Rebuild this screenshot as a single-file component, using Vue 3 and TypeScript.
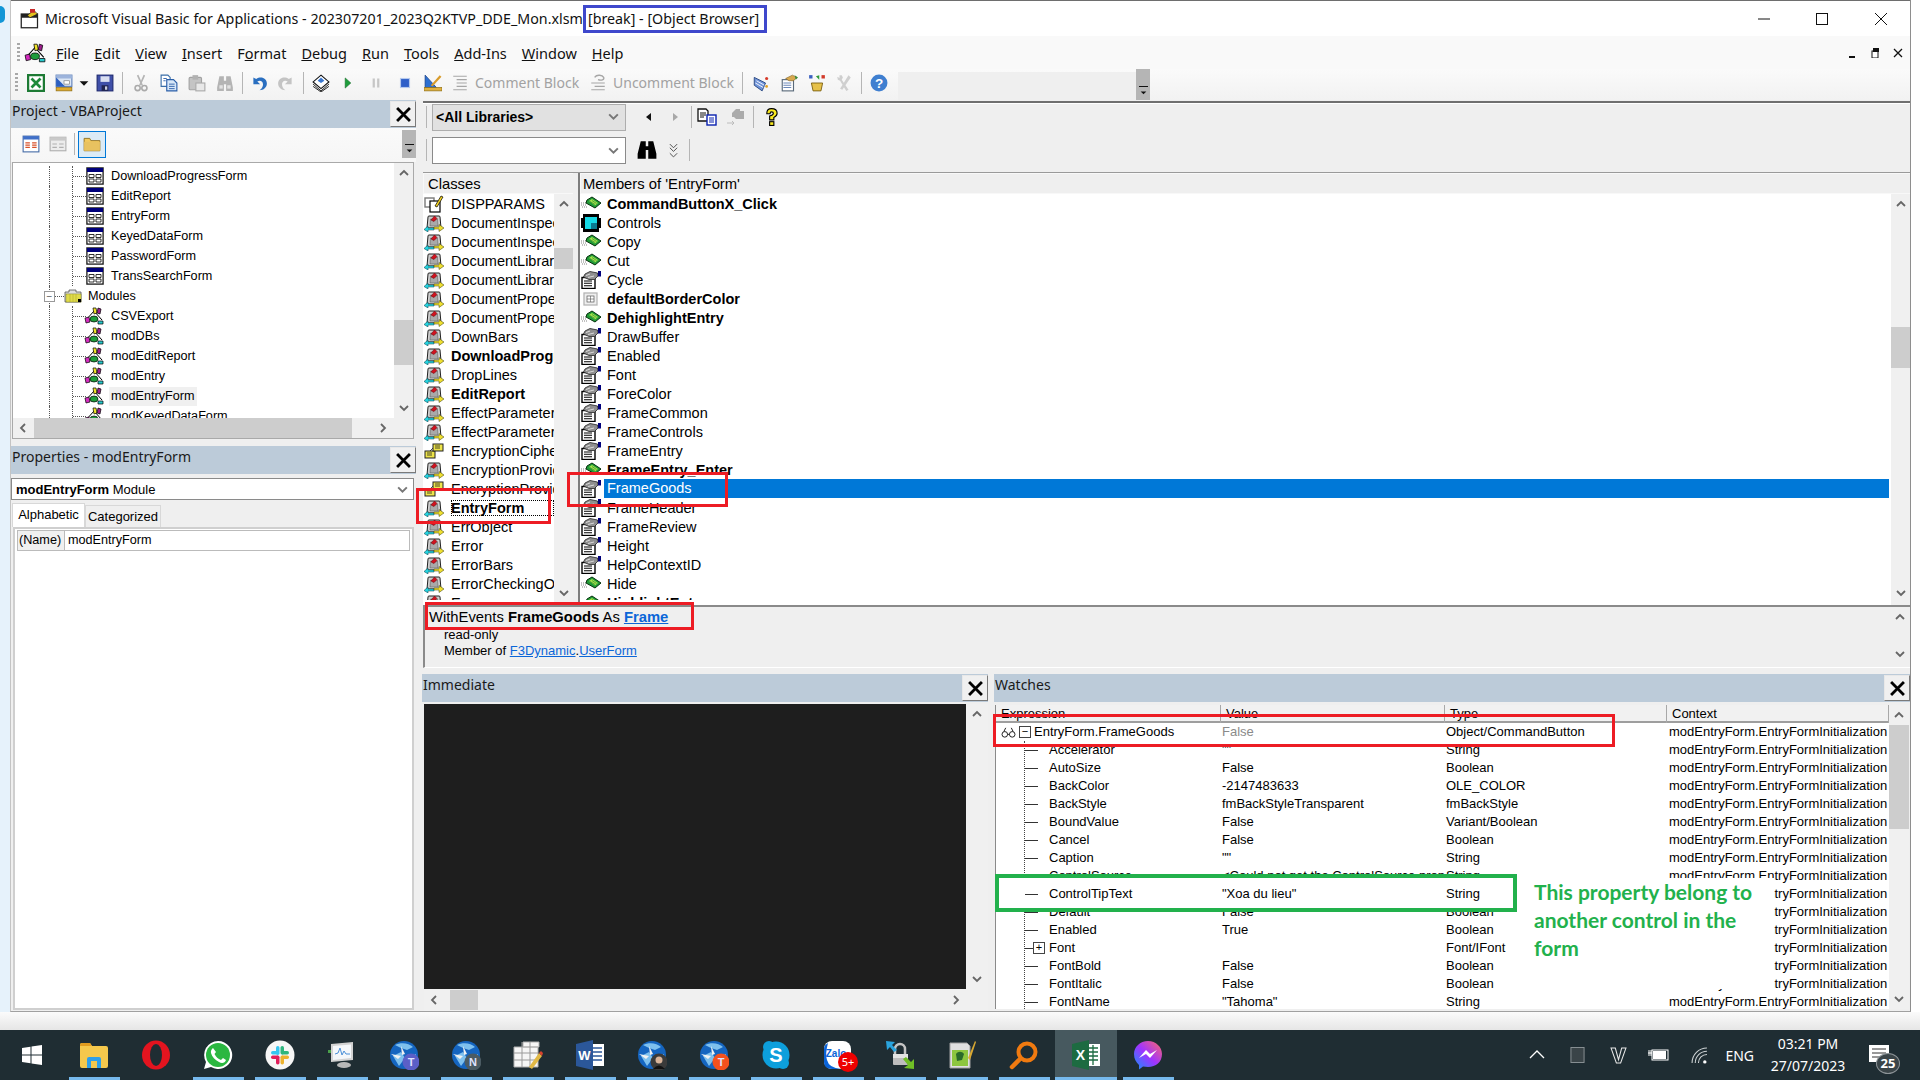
<script setup lang="ts">
interface Tool { id?: string; w: number; sep?: boolean; label?: string }
interface Item { t: string; icon: string; b?: boolean }
interface Watch { exp: string; val: string; type: string; kind?: string; gray?: boolean; top?: boolean }
interface App { id: string; line?: boolean; multi?: boolean; active?: boolean }

const menus = [
  { pre: '', key: 'F', post: 'ile' },
  { pre: '', key: 'E', post: 'dit' },
  { pre: '', key: 'V', post: 'iew' },
  { pre: '', key: 'I', post: 'nsert' },
  { pre: 'F', key: 'o', post: 'rmat' },
  { pre: '', key: 'D', post: 'ebug' },
  { pre: '', key: 'R', post: 'un' },
  { pre: '', key: 'T', post: 'ools' },
  { pre: '', key: 'A', post: 'dd-Ins' },
  { pre: '', key: 'W', post: 'indow' },
  { pre: '', key: 'H', post: 'elp' }
]

const tools: Tool[] = [
  { id: 'i-excel', w: 28 }, { id: 'i-uf', w: 27 }, { id: 'i-drop', w: 14 }, { id: 'i-save', w: 28 },
  { sep: true, w: 7 },
  { id: 'i-cut', w: 29 }, { id: 'i-copy', w: 28 }, { id: 'i-paste', w: 28 }, { id: 'i-find-g', w: 28 },
  { sep: true, w: 6 },
  { id: 'i-undo', w: 27 }, { id: 'i-redo', w: 27 },
  { sep: true, w: 8 },
  { id: 'i-break', w: 28 }, { id: 'i-play', w: 26 }, { id: 'i-pause', w: 30 }, { id: 'i-stop', w: 28 }, { id: 'i-design', w: 28 },
  { id: 'i-comment', w: 26 }, { label: 'Comment Block', w: 112 },
  { id: 'i-uncomment', w: 26 }, { label: 'Uncomment Block', w: 127 },
  { sep: true, w: 8 },
  { id: 'i-pb', w: 29 }, { id: 'i-hand', w: 28 }, { id: 'i-obj', w: 27 }, { id: 'i-wrench', w: 28 },
  { sep: true, w: 7 },
  { id: 'i-help', w: 27 }
]

const forms = ['DownloadProgressForm', 'EditReport', 'EntryForm', 'KeyedDataForm', 'PasswordForm', 'TransSearchForm']
const modules = ['CSVExport', 'modDBs', 'modEditReport', 'modEntry', 'modEntryForm', 'modKeyedDataForm']

const classes: Item[] = [
  { t: 'DISPPARAMS', icon: 'i-type' },
  { t: 'DocumentInspector', icon: 'i-class' },
  { t: 'DocumentInspectors', icon: 'i-class' },
  { t: 'DocumentLibraryVersion', icon: 'i-class' },
  { t: 'DocumentLibraryVersions', icon: 'i-class' },
  { t: 'DocumentProperties', icon: 'i-class' },
  { t: 'DocumentProperty', icon: 'i-class' },
  { t: 'DownBars', icon: 'i-class' },
  { t: 'DownloadProgressForm', icon: 'i-class', b: true },
  { t: 'DropLines', icon: 'i-class' },
  { t: 'EditReport', icon: 'i-class', b: true },
  { t: 'EffectParameter', icon: 'i-class' },
  { t: 'EffectParameters', icon: 'i-class' },
  { t: 'EncryptionCipherMode', icon: 'i-enum' },
  { t: 'EncryptionProvider', icon: 'i-class' },
  { t: 'EncryptionProviderDetail', icon: 'i-enum' },
  { t: 'EntryForm', icon: 'i-class', b: true },
  { t: 'ErrObject', icon: 'i-class' },
  { t: 'Error', icon: 'i-class' },
  { t: 'ErrorBars', icon: 'i-class' },
  { t: 'ErrorCheckingOptions', icon: 'i-class' },
  { t: 'Errors', icon: 'i-class' }
]

const members: Item[] = [
  { t: 'CommandButtonX_Click', icon: 'i-method', b: true },
  { t: 'Controls', icon: 'i-ctl' },
  { t: 'Copy', icon: 'i-method' },
  { t: 'Cut', icon: 'i-method' },
  { t: 'Cycle', icon: 'i-prop' },
  { t: 'defaultBorderColor', icon: 'i-const', b: true },
  { t: 'DehighlightEntry', icon: 'i-method', b: true },
  { t: 'DrawBuffer', icon: 'i-prop' },
  { t: 'Enabled', icon: 'i-prop' },
  { t: 'Font', icon: 'i-prop' },
  { t: 'ForeColor', icon: 'i-prop' },
  { t: 'FrameCommon', icon: 'i-prop' },
  { t: 'FrameControls', icon: 'i-prop' },
  { t: 'FrameEntry', icon: 'i-prop' },
  { t: 'FrameEntry_Enter', icon: 'i-method', b: true },
  { t: 'FrameGoods', icon: 'i-prop' },
  { t: 'FrameHeader', icon: 'i-prop' },
  { t: 'FrameReview', icon: 'i-prop' },
  { t: 'Height', icon: 'i-prop' },
  { t: 'HelpContextID', icon: 'i-prop' },
  { t: 'Hide', icon: 'i-method' },
  { t: 'HighlightEntry', icon: 'i-method', b: true }
]

const ctx = 'modEntryForm.EntryFormInitialization'

const watches: Watch[] = [
  { exp: 'EntryForm.FrameGoods', val: 'False', type: 'Object/CommandButton', kind: 'root', gray: true },
  { exp: 'Accelerator', val: '""', type: 'String' },
  { exp: 'AutoSize', val: 'False', type: 'Boolean' },
  { exp: 'BackColor', val: '-2147483633', type: 'OLE_COLOR' },
  { exp: 'BackStyle', val: 'fmBackStyleTransparent', type: 'fmBackStyle' },
  { exp: 'BoundValue', val: 'False', type: 'Variant/Boolean' },
  { exp: 'Cancel', val: 'False', type: 'Boolean' },
  { exp: 'Caption', val: '""', type: 'String' },
  { exp: 'ControlSource', val: '<Could not get the ControlSource property>', type: 'String' },
  { exp: 'ControlTipText', val: '"Xoa du lieu"', type: 'String', top: true },
  { exp: 'Default', val: 'False', type: 'Boolean' },
  { exp: 'Enabled', val: 'True', type: 'Boolean' },
  { exp: 'Font', val: '', type: 'Font/IFont', kind: 'plus' },
  { exp: 'FontBold', val: 'False', type: 'Boolean' },
  { exp: 'FontItalic', val: 'False', type: 'Boolean' },
  { exp: 'FontName', val: '"Tahoma"', type: 'String' }
]

const apps: App[] = [
  { id: 't-folder', line: true, multi: true },
  { id: 't-opera' },
  { id: 't-whatsapp', line: true },
  { id: 't-slack', line: true },
  { id: 't-monitor', line: true },
  { id: 't-globe-t', line: true },
  { id: 't-globe-n', line: true },
  { id: 't-table', line: true },
  { id: 't-word', line: true, multi: true },
  { id: 't-globe-p', line: true },
  { id: 't-globe-o', line: true },
  { id: 't-skype', line: true },
  { id: 't-zalo', line: true },
  { id: 't-lock', line: true },
  { id: 't-npp', line: true },
  { id: 't-search', line: true, multi: true },
  { id: 't-excel', line: true, multi: true, active: true },
  { id: 't-messenger', line: true }
]
</script>

<template>
  <div class="root">
    <svg class="defs" width="0" height="0" aria-hidden="true">
      <defs>
        <symbol id="chev" viewBox="0 0 12 12"><path d="M2 8 L6 4 L10 8" fill="none" stroke="currentColor" stroke-width="1.8" /></symbol>
        <symbol id="i-excel" viewBox="0 0 16 16"><rect x="1" y="1" width="14" height="14" fill="#fff" stroke="#1d7a34" stroke-width="2" /><path d="M4 4 L12 12 M12 4 L4 12" stroke="#1d8a3a" stroke-width="2.4" /></symbol>
        <symbol id="i-uf" viewBox="0 0 16 16"><rect x="1" y="1" width="14" height="10" fill="#dbe6f5" stroke="#5f7fb8" /><rect x="1" y="1" width="14" height="3" fill="#9db4dc" /><path d="M1 3 L9 11 H1 Z" fill="#2c5fc0" /><rect x="8" y="6" width="5" height="3" fill="#fff" stroke="#7a7a7a" stroke-width=".6" /><rect x="1" y="12" width="14" height="3" fill="#e0a92e" stroke="#8a6a10" stroke-width=".6" /></symbol>
        <symbol id="i-drop" viewBox="0 0 16 16"><path d="M3 6 H13 L8 11 Z" fill="#111" /></symbol>
        <symbol id="i-save" viewBox="0 0 16 16"><rect x="1" y="1" width="14" height="14" fill="#3f4fa8" stroke="#1f2a70" /><rect x="4" y="2" width="8" height="5" fill="#d9def0" /><rect x="5" y="10" width="6" height="5" fill="#20244f" /><rect x="8" y="11" width="2" height="3" fill="#c9cde0" /></symbol>
        <symbol id="i-cut" viewBox="0 0 16 16"><path d="M5 1 L9 10 M11 1 L7 10" stroke="#b4b4b4" stroke-width="1.5" /><circle cx="5" cy="12.5" r="2.3" fill="none" stroke="#aaa" stroke-width="1.4" /><circle cx="11" cy="12.5" r="2.3" fill="none" stroke="#aaa" stroke-width="1.4" /></symbol>
        <symbol id="i-copy" viewBox="0 0 16 16"><path d="M1 1 H7 L9 3 V11 H1 Z" fill="#fff" stroke="#3a6ea8" /><path d="M6 5 H12 L15 8 V15 H6 Z" fill="#d7e7f8" stroke="#2a5ea8" /><path d="M8 9 H13 M8 11 H13 M8 13 H13 M3 4 H6 M3 6 H5" stroke="#2a5ea8" stroke-width=".8" /></symbol>
        <symbol id="i-paste" viewBox="0 0 16 16"><rect x="1" y="3" width="11" height="11" rx="1" fill="#c4c4c4" stroke="#a2a2a2" /><rect x="4" y="1" width="5" height="4" fill="#b2b2b2" /><rect x="7" y="8" width="8" height="7" fill="#e8e8e8" stroke="#aaa" /></symbol>
        <symbol id="i-find-g" viewBox="0 0 16 16"><path d="M3 2 H7 V6 H9 V2 H13 L15 12 V15 H9 V9 H7 V15 H1 V12 Z" fill="#b4b4b4" /><rect x="3" y="10" width="3" height="3" fill="#e2e2e2" /><rect x="10" y="10" width="3" height="3" fill="#e2e2e2" /></symbol>
        <symbol id="i-find" viewBox="0 0 16 16"><path d="M3 1 H7 V5 H9 V1 H13 L15.5 11 V15 H9 V8 H7 V15 H.5 V11 Z" fill="#000" /></symbol>
        <symbol id="i-undo" viewBox="0 0 16 16"><path d="M3 3 V9 H9 L6.5 6.7 C9 5 12 6.5 11.5 10 C11.2 12 10 13.5 8.5 14.5 C12 14.5 15 12 15 8.5 C15 4 10 1.5 5.5 4.5 Z" fill="#2a6fc0" /></symbol>
        <symbol id="i-redo" viewBox="0 0 16 16"><path d="M13 3 V9 H7 L9.5 6.7 C7 5 4 6.5 4.5 10 C4.8 12 6 13.5 7.5 14.5 C4 14.5 1 12 1 8.5 C1 4 6 1.5 10.5 4.5 Z" fill="#c4c4c4" /></symbol>
        <symbol id="i-break" viewBox="0 0 16 16"><path d="M8 1 L15 7 L8 13 L1 7 Z" fill="#fff" stroke="#111" /><path d="M1 9 L8 15 L15 9 M1 11 L8 16 L15 11" fill="none" stroke="#111" stroke-width=".8" /><path d="M8 3 L11 6 L8 8 L5 6 Z" fill="#3a78d0" /></symbol>
        <symbol id="i-play" viewBox="0 0 16 16"><path d="M5.5 3.5 L10.5 8 L5.5 12.5 Z" fill="#1f9d3c" stroke="#0e6a22" stroke-width=".5" /></symbol>
        <symbol id="i-pause" viewBox="0 0 16 16"><rect x="5" y="4" width="2" height="8" fill="#c6c6c6" /><rect x="9" y="4" width="2" height="8" fill="#c6c6c6" /></symbol>
        <symbol id="i-stop" viewBox="0 0 16 16"><rect x="4" y="4" width="8" height="8" fill="#2f5fc8" stroke="#b5c9ee" /></symbol>
        <symbol id="i-design" viewBox="0 0 16 16"><path d="M1 1 L11 12 H1 Z" fill="#2c6fd0" stroke="#16408a" stroke-width=".7" /><path d="M6 10 L14 1 L15.5 2.5 L7.5 11 Z" fill="#d89b2a" /><rect x="0" y="12" width="16" height="3" fill="#e0b040" stroke="#8a6a10" stroke-width=".6" /></symbol>
        <symbol id="i-comment" viewBox="0 0 16 16"><path d="M2 2 H14 M5 5 H14 M5 8 H14 M5 11 H14 M2 14 H14" stroke="#a6a6a6" stroke-width="1.1" /></symbol>
        <symbol id="i-uncomment" viewBox="0 0 16 16"><path d="M5 3 C7 0 12 1 13 3 C14 5 11 6 8 5" fill="none" stroke="#a6a6a6" stroke-width="1.2" /><path d="M2 8 H14 M5 11 H14 M2 14 H14" stroke="#a6a6a6" stroke-width="1.1" /></symbol>
        <symbol id="i-pb" viewBox="0 0 16 16"><path d="M2 3 L12 8 L9 15 L2 10 Z" fill="#6f93d8" stroke="#27457f" stroke-width=".8" /><path d="M4 6 L11 10 M3 8 L10 12" stroke="#fff" stroke-width=".8" /><circle cx="13" cy="4" r="1.4" fill="#d63a2a" /><circle cx="13" cy="11" r="1.2" fill="#e0a020" /></symbol>
        <symbol id="i-hand" viewBox="0 0 16 16"><rect x="2" y="5" width="10" height="10" fill="#fff" stroke="#5a6a7a" /><path d="M3 8 H10 M3 10 H10 M3 12 H10" stroke="#5a7ab0" stroke-width=".8" /><path d="M5 4 L11 1 L15 3 L12 6 L8 6 Z" fill="#d8a84e" stroke="#7a5a1a" stroke-width=".5" /><path d="M13 1 L16 3 L14 5 Z" fill="#3a8a3a" /></symbol>
        <symbol id="i-obj" viewBox="0 0 16 16"><path d="M3 8 L13 8 L11.5 15 H4.5 Z" fill="#e6c14a" stroke="#7a5f10" stroke-width=".8" /><rect x="1" y="1" width="3" height="3" fill="#3a5fc0" /><path d="M7 2 L10 1 V5 Z" fill="#2f9a3a" /><rect x="12" y="1" width="3" height="3" fill="#d23a2a" /></symbol>
        <symbol id="i-wrench" viewBox="0 0 16 16"><path d="M4 1 L6 1 L7 3 L6 5 L12 14 L10 15 L4.5 6 L2.5 5 L2 2.5 L4 3.5 Z M12 1 L14 3 L6.5 14 L4.5 13 Z" fill="#cfcfcf" /></symbol>
        <symbol id="i-help" viewBox="0 0 16 16"><circle cx="8" cy="8" r="7.5" fill="#3f7fd0" /><text x="8" y="12.4" text-anchor="middle" font-family="Liberation Sans, sans-serif" font-weight="700" font-size="12" fill="#fff">?</text></symbol>
        <symbol id="i-code" viewBox="0 0 16 16"><rect x="1" y="1" width="14" height="14" fill="#fff" stroke="#4a6fa8" /><rect x="1" y="1" width="14" height="3" fill="#3f6fc8" /><path d="M3 7 H7 M3 9 H7 M3 11 H7 M9 7 H13 M9 9 H13 M9 11 H13" stroke="#d8502a" stroke-width="1" /></symbol>
        <symbol id="i-view" viewBox="0 0 16 16"><rect x="1" y="2" width="14" height="12" fill="#ececec" stroke="#b0b0b0" /><rect x="1" y="2" width="14" height="3" fill="#c9c9c9" /><path d="M3 8 H7 M3 11 H7 M9 8 H13 M9 11 H13" stroke="#b0b0b0" stroke-width="1" /></symbol>
        <symbol id="i-fold" viewBox="0 0 16 16"><path d="M1 3 H6 L7 5 H15 V14 H1 Z" fill="#f2c95c" stroke="#8d6d1c" stroke-width=".8" /><path d="M1 6 H15 V14 H1 Z" fill="#e8c260" /></symbol>
        <symbol id="i-form" viewBox="0 0 18 18"><rect width="18" height="18" fill="#a9a9a9" /><rect x="1" y="1" width="16" height="16" fill="#fff" stroke="#000" /><rect x="1" y="1" width="16" height="4" fill="#00007a" /><path d="M3 7.5 H8 V10.5 H3 Z M3 12 H8 V15 H3 Z M10 7.5 H15 V10.5 H10 Z M10 12 H15 V15 H10 Z" fill="none" stroke="#000" stroke-width=".8" /></symbol>
        <symbol id="i-mod" viewBox="0 0 20 18"><path d="M2 13 L10 4 L18 13" fill="none" stroke="#000" stroke-width="1" /><path d="M9 1 L12 1 L13 6 L10 7 Z" fill="#f3e52a" stroke="#000" stroke-width=".7" /><path d="M14 1 L17 2 L16 7 L13 6 Z" fill="#9d1f8d" stroke="#000" stroke-width=".7" /><path d="M1 11 L5 10 L6 15 L2 16 Z" fill="#d42bbf" stroke="#000" stroke-width=".7" /><ellipse cx="10" cy="12" rx="4" ry="3" fill="#1d9c3b" stroke="#000" stroke-width=".7" /><path d="M14 14 L19 14 L19 17 L14 17 Z" fill="#27c9cc" stroke="#000" stroke-width=".7" /></symbol>
        <symbol id="i-modf" viewBox="0 0 18 14"><path d="M1 3 H5 L5 1 H12 V3 H17 V13 H1 Z" fill="#ddd" stroke="#555" stroke-width=".8" /><rect x="2" y="5" width="15" height="8" fill="#f2ee55" stroke="#7a7a20" stroke-width=".6" /><path d="M3 7 H16 M3 9 H16 M3 11 H16 M6 5 V13 M9 5 V13 M12 5 V13" stroke="#a9a02a" stroke-width=".5" /><rect x="14" y="10" width="3" height="3" fill="#000" /></symbol>
        <symbol id="i-class" viewBox="0 0 20 18"><path d="M3 14 L4 3 Q4 2 5 2 H15 Q16 2 16 3 L17 14 Z" fill="#cfcfcf" stroke="#222" /><path d="M6 12 L6.5 5 H13.5 L14 12 Z" fill="#a9a9a9" stroke="#555" stroke-width=".5" /><path d="M7 6 L10.5 2 L13 4.5 L10 7.5 Z" fill="#d2121e" stroke="#5a0008" stroke-width=".5" /><path d="M0 15.5 L4 12 V14 H10 V16 H4 V18 Z" fill="#26d4e0" stroke="#0a3a44" stroke-width=".5" /><path d="M20 14 L15 10.5 V13 H10 V15 H15 V17.5 Z" fill="#f0e030" stroke="#3a3a00" stroke-width=".5" /></symbol>
        <symbol id="i-type" viewBox="0 0 20 18"><rect x="1" y="3" width="9" height="9" fill="#fff" stroke="#7a7a7a" stroke-width="1.4" /><rect x="6" y="6" width="10" height="11" fill="#fff" stroke="#000" stroke-width="1.2" /><path d="M11 11 L17 1 L19 2 L13 12 Z" fill="#f0d020" stroke="#000" stroke-width=".7" /></symbol>
        <symbol id="i-enum" viewBox="0 0 20 18"><rect x="1" y="9" width="10" height="7" fill="#eee44a" stroke="#222" /><rect x="9" y="2" width="10" height="7" fill="#eee44a" stroke="#222" /><path d="M3 11 H8 M3 13 H8 M11 4 H16 M11 6 H16 M6 9 L9 6" stroke="#222" stroke-width=".8" /></symbol>
        <symbol id="i-method" viewBox="0 0 20 18"><path d="M0 8 H6 M0 10 H5 M1 12 H6" stroke="#777" stroke-width=".9" stroke-dasharray="1 1" /><path d="M6 5 L11 2 L20 8 L14 13 L5 8 Z" fill="#1f9a36" stroke="#07300d" stroke-width="1" /><path d="M8 6 L11 4 L17 8 L14 10.5 Z" fill="#a4e34a" /><path d="M9 6.5 L14 9.5 M11 5.5 L15.5 8.5" stroke="#1f7a30" stroke-width=".6" /></symbol>
        <symbol id="i-ctl" viewBox="0 0 20 18"><rect x="2" y="0" width="16" height="18" fill="#000" /><rect x="0" y="4" width="20" height="10" fill="#000" /><rect x="4" y="3" width="12" height="12" fill="#16d8e4" /><rect x="10" y="9" width="6" height="6" fill="#0a7a90" /></symbol>
        <symbol id="i-prop" viewBox="0 0 20 18"><rect x="1" y="6.5" width="13" height="11" fill="#fff" stroke="#000" stroke-width="1.4" /><path d="M3 10 H11 M3 12.3 H11 M3 14.7 H11" stroke="#000" stroke-width="1.1" /><path d="M2.5 6 L4 3 L9 0.5 L16.5 2 L17 5 L13.5 8.5 L8 8.5 Z" fill="#8f8f8f" stroke="#222" stroke-width=".8" /><path d="M5 4.5 L9 3 M7 6.5 L13 5" stroke="#e2e2e2" stroke-width=".9" /><rect x="17" y="0" width="3" height="5.5" fill="#00007a" /></symbol>
        <symbol id="i-const" viewBox="0 0 20 18"><rect x="3" y="3" width="13" height="12" fill="#efefef" stroke="#b5b5b5" stroke-width="1.3" /><rect x="6" y="6" width="7" height="6" fill="#fff" stroke="#555" stroke-width=".7" /><path d="M9.5 6 V12 M6 9 H13" stroke="#555" stroke-width=".6" /></symbol>
        <symbol id="i-back" viewBox="0 0 12 12"><path d="M8 2 V10 L3 6 Z" fill="#111" /></symbol>
        <symbol id="i-fwd" viewBox="0 0 12 12"><path d="M4 2 V10 L9 6 Z" fill="#a8a8a8" /></symbol>
        <symbol id="i-docs" viewBox="0 0 20 18"><path d="M1 1 H9 L11 3 V13 H1 Z" fill="#fff" stroke="#111" stroke-width="1.3" /><path d="M3 5 H9 M3 7 H9 M3 9 H7" stroke="#111" /><rect x="10" y="7" width="9" height="10" fill="#fff" stroke="#0a22b0" stroke-width="1.4" /><path d="M12 10 H17 M12 12 H17 M12 14 H17" stroke="#0a22b0" /></symbol>
        <symbol id="i-plug" viewBox="0 0 20 18"><path d="M6 5 L10 1 H14 V3 H18 V11 H10 L8 9 H6 Z" fill="#ababab" /><path d="M1 15 H8 M6 13 L8 15 L6 17" stroke="#bcbcbc" fill="none" /></symbol>
        <symbol id="i-qm" viewBox="0 0 16 20"><path d="M3 6 Q3 1 8 1 Q14 1 14 6 Q14 9 10.5 10.5 V13 H6 V9 Q10 8 10 6 Q10 4.5 8 4.5 Q6.5 4.5 6.5 6.5 H3 Z" fill="#f8e81e" stroke="#000" stroke-width="1.2" /><rect x="6" y="15" width="4.5" height="4" fill="#f8e81e" stroke="#000" stroke-width="1.2" /></symbol>
        <symbol id="i-show" viewBox="0 0 12 16"><path d="M2 1 L6 5 L10 1 M2 5 L6 9 L10 5 M2 11 L6 15 L10 11" fill="none" stroke="#444" stroke-width="1" /></symbol>
        <symbol id="i-glass" viewBox="0 0 16 14"><circle cx="4" cy="9" r="3" fill="none" stroke="#111" /><circle cx="12" cy="9" r="3" fill="none" stroke="#111" /><path d="M7 9 H9 M3 6 L5 2 M13 6 L11 2" stroke="#111" fill="none" /></symbol>

        <symbol id="t-win" viewBox="0 0 20 20"><path d="M0 3 L8.5 1.8 V9.5 H0 Z M9.5 1.6 L20 0 V9.5 H9.5 Z M0 10.5 H8.5 V18.2 L0 17 Z M9.5 10.5 H20 V20 L9.5 18.4 Z" fill="#fff" /></symbol>
        <symbol id="t-folder" viewBox="0 0 30 30"><path d="M1 5 Q1 3 3 3 H11 L13 6 H27 Q29 6 29 8 V26 Q29 28 27 28 H3 Q1 28 1 26 Z" fill="#f5c84c" /><path d="M1 5 Q1 3 3 3 H11 L13 6 H1 Z" fill="#e09b1f" /><path d="M8 28 V19 Q8 17 10 17 H20 Q22 17 22 19 V28 H18 V21 H12 V28 Z" fill="#2f9fe8" /></symbol>
        <symbol id="t-opera" viewBox="0 0 30 30"><ellipse cx="15" cy="15" rx="14" ry="14.5" fill="#e3141f" /><ellipse cx="15" cy="15" rx="6" ry="11" fill="#1f2d33" /></symbol>
        <symbol id="t-whatsapp" viewBox="0 0 30 30"><path d="M15 1 A14 14 0 1 1 8 27 L1 29 L3 22 A14 14 0 0 1 15 1 Z" fill="#fff" /><circle cx="15" cy="15" r="12" fill="#2bb741" /><path d="M10 8 L13 12 L11.5 14 C13 17 15 19 18 20 L20 18 L23 20 C22 23 19 24 16 22 C12 20 9 17 8 13 C7.5 11 8.5 9 10 8 Z" fill="#fff" /></symbol>
        <symbol id="t-slack" viewBox="0 0 30 30"><circle cx="15" cy="15" r="14.5" fill="#f6f6f6" /><rect x="11" y="6" width="3.5" height="9" rx="1.7" fill="#36c5f0" /><rect x="6" y="11" width="8" height="3.5" rx="1.7" fill="#36c5f0" /><rect x="15.5" y="6" width="3.5" height="8.5" rx="1.7" fill="#2eb67d" /><rect x="16" y="11" width="8" height="3.5" rx="1.7" fill="#2eb67d" /><rect x="15.5" y="15.5" width="3.5" height="9" rx="1.7" fill="#ecb22e" /><rect x="16" y="15.5" width="8" height="3.5" rx="1.7" fill="#ecb22e" /><rect x="11" y="15.5" width="3.5" height="9" rx="1.7" fill="#e01e5a" /><rect x="6" y="15.5" width="8" height="3.5" rx="1.7" fill="#e01e5a" /></symbol>
        <symbol id="t-monitor" viewBox="0 0 30 30"><path d="M4 4 L26 2 V20 L4 22 Z" fill="#d2d2d2" /><path d="M6 6 L24 4.5 V18 L6 20 Z" fill="#f4f7fa" /><path d="M8 14 L11 13 L13 8 L15 15 L17 11 L19 14 H23" fill="none" stroke="#4a8fd8" /><ellipse cx="17" cy="25" rx="7" ry="3" fill="#b8b8b8" /><rect x="1" y="10" width="3" height="3" fill="#4aa04a" /></symbol>
        <symbol id="t-globe" viewBox="0 0 30 30"><circle cx="15" cy="15" r="14" fill="#1565c0" /><path d="M6 5 C12 2 20 3 24 7 L18 10 L12 8 Z M4 16 L12 12 L16 18 L10 26 Z M20 18 L27 14 L26 22 L20 26 Z" fill="#7ec0ee" /><path d="M2 14 L12 16 L9 19 Z M12 6 L16 14 L13 15 Z" fill="#f1f1f1" /></symbol>
        <symbol id="t-table" viewBox="0 0 30 30"><path d="M1 7 H25 V27 H1 Z M10 2 H26 V7 H10 Z" fill="#f6f6f6" stroke="#b0b0b0" /><path d="M9 2 V27 M17 2 V27 M1 13 H25 M1 20 H25" stroke="#9a9a9a" /><path d="M16 27 L26 13 L29 16 L19 29 Z" fill="#e0b845" /><path d="M26 13 L29 16 L30 13 L28 11 Z" fill="#d8432e" /></symbol>
        <symbol id="t-word" viewBox="0 0 30 30"><rect x="14" y="4" width="15" height="22" fill="#fff" /><path d="M17 8 H27 M17 12 H27 M17 16 H27 M17 20 H27" stroke="#2b579a" stroke-width="1.5" /><path d="M1 4 L18 0 V30 L1 26 Z" fill="#2b579a" /><text x="9.5" y="20" text-anchor="middle" font-family="Liberation Sans, sans-serif" font-weight="700" font-size="13" fill="#fff">W</text></symbol>
        <symbol id="t-skype" viewBox="0 0 30 30"><circle cx="15" cy="15" r="13.5" fill="#0d9fdc" /><circle cx="8" cy="7" r="6" fill="#0d9fdc" /><circle cx="22" cy="23" r="6" fill="#0d9fdc" /><text x="15" y="22" text-anchor="middle" font-family="Liberation Sans, sans-serif" font-weight="700" font-size="20" fill="#fff">S</text></symbol>
        <symbol id="t-zalo" viewBox="0 0 30 30"><rect x="1" y="1" width="27" height="28" rx="8" fill="#fff" /><path d="M1 9 V22 Q1 29 9 29 H18 Q6 28 4 20 Q2 14 5 3 Q1 5 1 9 Z" fill="#0a63d8" /><text x="13" y="17" text-anchor="middle" font-family="Liberation Sans, sans-serif" font-weight="700" font-size="10" fill="#0a63d8">Zalo</text></symbol>
        <symbol id="t-lock" viewBox="0 0 30 30"><path d="M10 14 V9 A5 5 0 0 1 20 9 V14" fill="none" stroke="#c4c4c4" stroke-width="2.5" /><rect x="8" y="14" width="15" height="11" rx="1" fill="#bdbdbd" /><rect x="8" y="14" width="15" height="4" fill="#e3e3e3" /><path d="M1 1 L10 2 L7 5 L12 10 L9 12 L5 7 L2 10 Z" fill="#2aa4de" /><path d="M29 29 L19 28 L23 25 L18 19 L21 17 L26 22 L29 19 Z" fill="#6fbe26" /></symbol>
        <symbol id="t-npp" viewBox="0 0 30 30"><path d="M3 3 H20 L23 6 V28 H3 Z" fill="#e0e0e0" stroke="#a0a0a0" /><rect x="5" y="10" width="16" height="16" fill="#8dc63f" /><path d="M9 14 C11 11 15 11 17 14 L15 20 L10 21 Z" fill="#2a6a2a" /><path d="M21 18 L28 1 L29 2 L23 20 Z" fill="#d8a832" /></symbol>
        <symbol id="t-search" viewBox="0 0 30 30"><circle cx="18" cy="12" r="8.5" fill="none" stroke="#f07a10" stroke-width="4" /><path d="M11 19 L3 27" stroke="#f07a10" stroke-width="4.5" stroke-linecap="round" /></symbol>
        <symbol id="t-excel" viewBox="0 0 30 30"><rect x="14" y="4" width="15" height="22" fill="#fff" /><path d="M17 8 H27 M17 12 H27 M17 16 H27 M17 20 H27 M22 5 V25" stroke="#1d6b41" stroke-width="1.3" /><path d="M1 4 L18 0 V30 L1 26 Z" fill="#1d6b41" /><text x="9.5" y="20" text-anchor="middle" font-family="Liberation Sans, sans-serif" font-weight="700" font-size="14" fill="#fff">X</text></symbol>
        <symbol id="t-messenger" viewBox="0 0 30 30"><defs><linearGradient id="msg" x1="0" y1="1" x2="1" y2="0"><stop offset="0" stop-color="#1292ff" /><stop offset=".5" stop-color="#a033ff" /><stop offset="1" stop-color="#ff6968" /></linearGradient></defs><path d="M15 1 C23 1 29 7 29 14 C29 22 23 27 15 27 L10 26.5 L6 29.5 V25 C3 22 1 19 1 14 C1 7 7 1 15 1 Z" fill="url(#msg)" /><path d="M6 18 L13 10 L17 14 L24 10 L17 18 L13 14 Z" fill="#fff" /></symbol>
      </defs>
    </svg>

    <span class="desk-dot"></span>

    <div class="main">
      <div class="window">
        <header class="titlebar">
          <svg class="app-ic" viewBox="0 0 16 16"><rect x="1" y="4" width="13" height="11" fill="#fff" stroke="#222" /><path d="M1 4 H14 V7 H1 Z" fill="#222" /><path d="M6 5 L11 1 L14 4 L8 7 Z" fill="#e2c21e" stroke="#222" stroke-width=".6" /><rect x="8" y="0" width="4" height="3" fill="#c92a2a" /></svg>
          <span class="title-text">Microsoft Visual Basic for Applications - 202307201_2023Q2KTVP_DDE_Mon.xlsm</span>
          <span class="title-box">[break] - [Object Browser]</span>
          <div class="win-btns">
            <span class="win-btn"><svg viewBox="0 0 12 12" width="12" height="12"><path d="M0 6 H12" stroke="#111" /></svg></span>
            <span class="win-btn"><svg viewBox="0 0 12 12" width="12" height="12"><rect x=".5" y=".5" width="11" height="11" fill="none" stroke="#111" /></svg></span>
            <span class="win-btn"><svg viewBox="0 0 12 12" width="12" height="12"><path d="M0 0 L12 12 M12 0 L0 12" stroke="#111" /></svg></span>
          </div>
        </header>

        <nav class="menubar">
          <span class="grip"></span>
          <svg class="menu-ic" viewBox="0 0 20 18"><use href="#i-mod" /></svg>
          <span v-for="m in menus" :key="m.key + m.post" class="menu-item">{{ m.pre }}<u>{{ m.key }}</u>{{ m.post }}</span>
          <div class="mdi-btns">
            <svg viewBox="0 0 10 10" width="10" height="10"><rect x="2" y="8" width="6" height="2" fill="#111" /></svg>
            <svg viewBox="0 0 10 10" width="10" height="10"><rect x="2" y="3" width="6" height="7" fill="#fff" stroke="#111" /><rect x="3" y="0" width="6" height="4" fill="#111" /></svg>
            <svg viewBox="0 0 10 10" width="10" height="10"><path d="M1 1 L9 9 M9 1 L1 9" stroke="#111" stroke-width="1.3" /></svg>
          </div>
        </nav>

        <div class="toolbar">
          <span class="grip tb-grip"></span>
          <template v-for="(t, i) in tools" :key="i">
            <span v-if="t.sep" class="tb-sep-slot" :style="{ width: t.w + 'px' }"><i class="tb-sep"></i></span>
            <span v-else-if="t.label" class="tb-label" :style="{ width: t.w + 'px' }">{{ t.label }}</span>
            <span v-else class="tb-btn" :style="{ width: t.w + 'px' }"><svg class="ic16" viewBox="0 0 16 16"><use :href="`#${t.id}`" /></svg></span>
          </template>
          <span class="tb-well"></span>
          <span class="tb-handle"><i></i><svg viewBox="0 0 16 16" width="9" height="9"><use href="#i-drop" /></svg></span>
        </div>

        <div class="workspace">
          <aside class="left">
            <section class="project">
              <div class="pane-title"><span>Project - VBAProject</span><button class="x-btn">
                <svg viewBox="0 0 14 14" width="15" height="15"><path d="M1 1 L13 13 M13 1 L1 13" stroke="#000" stroke-width="2.6" /></svg></button></div>
              <div class="proj-tools">
                <span class="pt-btn"><svg class="ic16" viewBox="0 0 16 16"><use href="#i-code" /></svg></span>
                <span class="pt-btn"><svg class="ic16" viewBox="0 0 16 16"><use href="#i-view" /></svg></span>
                <i class="tb-sep pt-sep"></i>
                <span class="pt-btn on"><svg class="ic16" viewBox="0 0 16 16"><use href="#i-fold" /></svg></span>
                <span class="tb-handle pt-handle"><i></i><svg viewBox="0 0 16 16" width="9" height="9"><use href="#i-drop" /></svg></span>
              </div>
              <div class="tree">
                <div class="tree-top">
                  <div class="tree-rows">
                    <div v-for="f in forms" :key="f" class="tree-row">
                      <i class="g1"></i><i class="g2"></i>
                      <svg class="tree-ic" viewBox="0 0 18 18"><use href="#i-form" /></svg>
                      <span class="tree-text">{{ f }}</span>
                    </div>
                    <div class="tree-row">
                      <i class="g1 g1-short"></i>
                      <span class="minus">−</span><i class="g3"></i>
                      <svg class="folder-ic" viewBox="0 0 18 14"><use href="#i-modf" /></svg>
                      <span class="tree-text folder-text">Modules</span>
                    </div>
                    <div v-for="m in modules" :key="m" class="tree-row">
                      <i class="g1"></i><i class="g2"></i>
                      <svg class="tree-ic mod" viewBox="0 0 20 18"><use href="#i-mod" /></svg>
                      <span class="tree-text" :class="{ sel: m === 'modEntryForm' }">{{ m }}</span>
                    </div>
                  </div>
                  <div class="vscroll tree-scroll">
                    <svg class="chev" viewBox="0 0 12 12"><use href="#chev" /></svg>
                    <span class="thumb-space top"></span>
                    <span class="thumb"></span>
                    <span class="thumb-space"></span>
                    <svg class="chev down" viewBox="0 0 12 12"><use href="#chev" /></svg>
                  </div>
                </div>
                <div class="hscroll">
                  <svg class="chev left-a" viewBox="0 0 12 12"><use href="#chev" /></svg>
                  <span class="h-thumb"></span>
                  <svg class="chev right-a" viewBox="0 0 12 12"><use href="#chev" /></svg>
                </div>
              </div>
            </section>

            <section class="props">
              <div class="pane-title"><span>Properties - modEntryForm</span><button class="x-btn">
                <svg viewBox="0 0 14 14" width="15" height="15"><path d="M1 1 L13 13 M13 1 L1 13" stroke="#000" stroke-width="2.6" /></svg></button></div>
              <div class="prop-combo"><span><b>modEntryForm</b> Module</span>
                <svg class="chev down thin" viewBox="0 0 12 12"><use href="#chev" /></svg></div>
              <div class="tabs"><span class="tab on">Alphabetic</span><span class="tab">Categorized</span></div>
              <div class="prop-grid">
                <div class="prop-row"><span class="prop-name">(Name)</span><span class="prop-val">modEntryForm</span></div>
              </div>
            </section>
          </aside>

          <div class="right">
            <section class="browser">
              <div class="ob-tools">
                <div class="ob-row">
                  <i class="tb-sep ob-grip"></i>
                  <div class="ob-combo gray"><b>&lt;All Libraries&gt;</b><svg class="chev down thin" viewBox="0 0 12 12"><use href="#chev" /></svg></div>
                  <span class="ob-btn first"><svg viewBox="0 0 12 12" width="12" height="12"><use href="#i-back" /></svg></span>
                  <span class="ob-btn"><svg viewBox="0 0 12 12" width="12" height="12"><use href="#i-fwd" /></svg></span>
                  <i class="tb-sep"></i>
                  <span class="ob-btn wide"><svg viewBox="0 0 20 18" width="20" height="18"><use href="#i-docs" /></svg></span>
                  <span class="ob-btn wide"><svg viewBox="0 0 20 18" width="20" height="18"><use href="#i-plug" /></svg></span>
                  <i class="tb-sep"></i>
                  <span class="ob-btn wide qm"><svg viewBox="0 0 16 20" width="15" height="20"><use href="#i-qm" /></svg></span>
                </div>
                <div class="ob-row">
                  <i class="tb-sep ob-grip"></i>
                  <div class="ob-combo"><span></span><svg class="chev down thin" viewBox="0 0 12 12"><use href="#chev" /></svg></div>
                  <span class="ob-btn first find"><svg viewBox="0 0 16 16" width="20" height="20"><use href="#i-find" /></svg></span>
                  <span class="ob-btn show"><svg viewBox="0 0 12 16" width="11" height="15"><use href="#i-show" /></svg></span>
                  <i class="tb-sep"></i>
                </div>
              </div>

              <div class="ob-lists">
                <div class="classes">
                  <div class="list-head">Classes</div>
                  <div class="list-body">
                    <div class="rows">
                      <div v-for="c in classes" :key="c.t" class="row" :class="{ bold: c.b }">
                        <svg class="row-ic" viewBox="0 0 20 18"><use :href="`#${c.icon}`" /></svg>
                        <span class="row-text" :class="{ focus: c.t === 'EntryForm' }">{{ c.t }}</span>
                      </div>
                    </div>
                    <div class="vscroll class-scroll">
                      <svg class="chev" viewBox="0 0 12 12"><use href="#chev" /></svg>
                      <span class="thumb-space cs-top"></span>
                      <span class="thumb cs-thumb"></span>
                      <span class="thumb-space"></span>
                      <svg class="chev down" viewBox="0 0 12 12"><use href="#chev" /></svg>
                    </div>
                  </div>
                </div>
                <div class="members">
                  <div class="list-head">Members of 'EntryForm'</div>
                  <div class="list-body">
                    <div class="rows">
                      <div v-for="m in members" :key="m.t" class="row" :class="{ bold: m.b, picked: m.t === 'FrameGoods' }">
                        <svg class="row-ic" viewBox="0 0 20 18"><use :href="`#${m.icon}`" /></svg>
                        <span class="row-text">{{ m.t }}</span>
                      </div>
                    </div>
                    <div class="vscroll mem-scroll">
                      <svg class="chev" viewBox="0 0 12 12"><use href="#chev" /></svg>
                      <span class="thumb-space ms-top"></span>
                      <span class="thumb ms-thumb"></span>
                      <span class="thumb-space"></span>
                      <svg class="chev down" viewBox="0 0 12 12"><use href="#chev" /></svg>
                    </div>
                  </div>
                </div>
              </div>

              <div class="desc">
                <div class="desc-text">
                  <div class="d1">WithEvents <b>FrameGoods</b> As <a><b>Frame</b></a></div>
                  <div class="d2">read-only</div>
                  <div class="d2">Member of <a>F3Dynamic</a>.<a>UserForm</a></div>
                </div>
                <div class="desc-scroll">
                  <svg class="chev" viewBox="0 0 12 12"><use href="#chev" /></svg>
                  <svg class="chev down" viewBox="0 0 12 12"><use href="#chev" /></svg>
                </div>
              </div>
            </section>

            <div class="bottom">
              <section class="immediate">
                <div class="pane-title"><span>Immediate</span><button class="x-btn">
                  <svg viewBox="0 0 14 14" width="15" height="15"><path d="M1 1 L13 13 M13 1 L1 13" stroke="#000" stroke-width="2.6" /></svg></button></div>
                <div class="imm-body">
                  <div class="imm-black"></div>
                  <div class="vscroll imm-scroll">
                    <svg class="chev" viewBox="0 0 12 12"><use href="#chev" /></svg>
                    <span class="thumb-space"></span>
                    <svg class="chev down" viewBox="0 0 12 12"><use href="#chev" /></svg>
                  </div>
                </div>
                <div class="hscroll imm-h">
                  <svg class="chev left-a" viewBox="0 0 12 12"><use href="#chev" /></svg>
                  <span class="imm-thumb"></span>
                  <svg class="chev right-a" viewBox="0 0 12 12"><use href="#chev" /></svg>
                </div>
              </section>

              <section class="watches">
                <div class="pane-title"><span>Watches</span><button class="x-btn">
                  <svg viewBox="0 0 14 14" width="15" height="15"><path d="M1 1 L13 13 M13 1 L1 13" stroke="#000" stroke-width="2.6" /></svg></button></div>
                <div class="w-body">
                  <div class="w-table">
                    <div class="w-head">
                      <span>Expression</span><span>Value</span><span>Type</span><span>Context</span>
                    </div>
                    <div class="w-rows">
                      <i class="w-line"></i>
                      <div v-for="w in watches" :key="w.exp" class="w-row" :class="{ top: w.top }">
                        <span class="w-exp">
                          <template v-if="w.kind === 'root'">
                            <svg class="glass" viewBox="0 0 16 14"><use href="#i-glass" /></svg>
                            <span class="box-mark">−</span>
                          </template>
                          <template v-else-if="w.kind === 'plus'">
                            <i class="w-dash short"></i><span class="box-mark plus">+</span>
                          </template>
                          <i v-else class="w-dash"></i>
                          <span>{{ w.exp }}</span>
                        </span>
                        <span class="w-val" :class="{ gray: w.gray }">{{ w.val }}</span>
                        <span class="w-type">{{ w.type }}</span>
                        <span class="w-ctx">{{ ctx }}</span>
                      </div>
                    </div>
                  </div>
                  <div class="vscroll w-scroll">
                    <svg class="chev" viewBox="0 0 12 12"><use href="#chev" /></svg>
                    <span class="thumb w-thumb"></span>
                    <span class="thumb-space"></span>
                    <svg class="chev down" viewBox="0 0 12 12"><use href="#chev" /></svg>
                  </div>
                </div>
              </section>
            </div>
          </div>
        </div>
      </div>
      <div class="shade"></div>
    </div>

    <footer class="taskbar">
      <span class="start"><svg viewBox="0 0 20 20" width="20" height="20"><use href="#t-win" /></svg></span>
      <span v-for="a in apps" :key="a.id" class="app" :class="{ active: a.active, line: a.line, multi: a.multi }">
        <svg v-if="a.id.startsWith('t-globe')" class="app-svg" viewBox="0 0 30 30">
          <use href="#t-globe" />
          <template v-if="a.id === 't-globe-t'"><circle cx="22" cy="22" r="8.5" fill="#5b5fc7" /><text x="22" y="26" text-anchor="middle" class="badge-t">T</text></template>
          <template v-if="a.id === 't-globe-n'"><circle cx="22" cy="22" r="8.5" fill="#4b5b63" /><text x="22" y="26" text-anchor="middle" class="badge-t">N</text></template>
          <template v-if="a.id === 't-globe-p'"><circle cx="22" cy="22" r="8.5" fill="#3a3a3a" /><circle cx="22" cy="20" r="3.5" fill="#d9b49a" /><path d="M16 29 Q22 22 28 29 Z" fill="#111" /></template>
          <template v-if="a.id === 't-globe-o'"><circle cx="22" cy="22" r="8.5" fill="#f4511e" /><text x="22" y="26" text-anchor="middle" class="badge-t">T</text></template>
        </svg>
        <svg v-else class="app-svg" viewBox="0 0 30 30"><use :href="`#${a.id}`" /></svg>
        <span v-if="a.id === 't-zalo'" class="zalo-badge">5+</span>
      </span>
      <span class="tb-fill"></span>
      <span class="tray"><svg viewBox="0 0 16 16" width="16" height="16"><path d="M1 11 L8 4 L15 11" fill="none" stroke="#fff" stroke-width="1.3" /></svg></span>
      <span class="tray"><svg viewBox="0 0 16 16" width="15" height="16"><rect x="1" y="0" width="14" height="16" fill="#3a4448" stroke="#8d9498" /></svg></span>
      <span class="tray"><svg viewBox="0 0 16 16" width="17" height="17"><path d="M1 1 H5 L8 12 L11 1 H15 L10 15 H6 Z" fill="none" stroke="#e8e8e8" /></svg></span>
      <span class="tray"><svg viewBox="0 0 21 12" width="21" height="12"><rect x="4" y="1" width="16" height="10" fill="#1f2d33" stroke="#fff" /><rect x="5" y="2" width="13" height="8" fill="#fff" /><path d="M0 4 H4 M1 1 V7 M3 1 V7" stroke="#fff" /></svg></span>
      <span class="tray"><svg viewBox="0 0 16 16" width="17" height="17"><path d="M1 15 A14 14 0 0 1 15 1 M4 15 A11 11 0 0 1 15 4 M7 15 A8 8 0 0 1 15 7" fill="none" stroke="#cfd4d6" /><circle cx="13" cy="14" r="1.6" fill="#fff" /></svg></span>
      <span class="tray eng">ENG</span>
      <span class="clock"><span>03:21 PM</span><span>27/07/2023</span></span>
      <span class="notif">
        <svg viewBox="0 0 20 17" width="20" height="17"><rect width="20" height="17" fill="#fff" /><path d="M3 4 H17 M3 8 H17 M3 12 H12" stroke="#333" /></svg>
        <b class="notif-n">25</b>
      </span>
    </footer>

    <!-- annotations drawn on top of the screenshot -->
    <i class="mark red m-class"></i>
    <i class="mark red m-member"></i>
    <i class="mark red m-desc"></i>
    <i class="mark red m-watch"></i>
    <span class="note-bg"></span>
    <i class="mark green m-tip"></i>
    <div class="note">This property belong to<br />another control in the<br />form</div>
  </div>
</template>

<style>
html, body { margin: 0; background: #fff; }
</style>

<style scoped>
* { box-sizing: border-box; }
.root {
  position: relative;
  width: 1920px;
  height: 1080px;
  overflow: hidden;
  display: flex;
  flex-direction: column;
  font: 13px "Liberation Sans", Arial, sans-serif;
  color: #000;
  background: #fff;
}
.defs { position: absolute; }
.desk-dot { position: absolute; left: -5px; top: 6px; width: 10px; height: 17px; border-radius: 5px; background: #1296d6; }

.main { height: 1030px; padding-left: 10px; background: linear-gradient(90deg, #e6f2fb 10px, #fff 10px); }
.window {
  width: 1901px;
  height: 1012px;
  display: flex;
  flex-direction: column;
  background: #efefef;
  border-right: 1px solid #8e8e8e;
  border-left: 1px solid #c4c4c4;
  border-bottom: 1px solid #a0a0a0;
}
.shade { height: 18px; margin-left: -10px; background: linear-gradient(#fbfbfb, #e6e6e6); }

.titlebar {
  height: 36px;
  flex: none;
  display: flex;
  align-items: center;
  background: #fff;
  border-top: 1px solid #6e6e6e;
  padding-left: 9px;
  font: 14.25px "Noto Sans", sans-serif;
  color: #111;
}
.app-ic { width: 20px; height: 20px; margin-right: 5px; }
.title-text { width: 538px; white-space: nowrap; }
.title-box {
  height: 28px;
  width: 184px;
  border: 3px solid #3f48cc;
  line-height: 21px;
  padding-left: 2px;
  white-space: nowrap;
  overflow: hidden;
}
.win-btns { margin-left: auto; display: flex; }
.win-btn { width: 58.5px; height: 30px; display: flex; align-items: center; justify-content: center; }

.menubar {
  height: 33px;
  flex: none;
  display: flex;
  align-items: center;
  background: #f9f9f9;
  padding-left: 6px;
  font: 14.5px "Noto Sans", sans-serif;
}
.grip { width: 3px; height: 20px; margin-right: 4px; background: repeating-linear-gradient(#a8a8a8 0 2px, transparent 2px 4px); }
.menu-ic { width: 22px; height: 22px; margin-right: 10px; }
.menu-item { margin-right: 15px; white-space: nowrap; color: #111; }
.mdi-btns { margin-left: auto; display: flex; gap: 13px; margin-right: 7px; }

.toolbar {
  height: 31px;
  flex: none;
  display: flex;
  align-items: flex-start;
  padding: 1px 0 0 4px;
  background: linear-gradient(#fafafa, #f2f2f2);
  font: 14px "Noto Sans", sans-serif;
}
.tb-grip { margin-top: 3px; }
.tb-btn, .tb-sep-slot { height: 26px; display: flex; align-items: center; justify-content: center; flex: none; }
.ic16 { width: 18px; height: 18px; }
.tb-sep { display: block; width: 1px; height: 22px; background: #b5b5b5; flex: none; }
.tb-label { color: #a2a2a2; white-space: nowrap; flex: none; padding-left: 2px; line-height: 26px; }
.tb-well { width: 238px; height: 28px; background: #efefef; margin: 2px 0 0 6px; }
.tb-handle { width: 14px; height: 31px; background: #b5b5b5; display: flex; flex-direction: column; align-items: center; justify-content: flex-end; padding-bottom: 3px; margin-top: -1px; }
.tb-handle i { width: 9px; height: 1px; background: #111; margin-bottom: 1px; }

.workspace { flex: 1; min-height: 0; display: flex; }
.left { width: 405px; margin-right: 6px; flex: none; display: flex; flex-direction: column; }
.right { width: 1488px; flex: none; display: flex; flex-direction: column; }

.pane-title {
  height: 28px;
  flex: none;
  display: flex;
  align-items: center;
  justify-content: space-between;
  background: #bccbd9;
  font: 14px "Noto Sans", sans-serif;
  color: #1a1a1a;
  padding-left: 1px;
}
.pane-title > span { align-self: flex-start; line-height: 21px; }
.x-btn {
  width: 26px;
  height: 26px;
  padding: 0;
  border: 1px solid #e8e8e8;
  border-right-color: #7a7a7a;
  border-bottom-color: #7a7a7a;
  background: #f0f0f0;
  display: flex;
  align-items: center;
  justify-content: center;
}

.project { height: 339px; display: flex; flex-direction: column; flex: none; }
.proj-tools { height: 34px; flex: none; display: flex; align-items: center; padding: 0 0 2px 6px; background: linear-gradient(#fafafa, #f6f6f6); }
.pt-btn { width: 27px; height: 27px; display: flex; align-items: center; justify-content: center; }
.pt-btn.on { width: 28px; background: #dcebf6; border: 1px solid #0078d7; }
.pt-sep { margin: 0 3px 0 3px; }
.pt-handle { margin: 0 0 0 auto; height: 28px; }

.tree { flex: 1; min-height: 0; margin-left: 1px; border: 1px solid #a9a9a9; background: #fff; display: flex; flex-direction: column; margin-right: 2px; font-size: 12.65px; }
.tree-top { flex: 1; min-height: 0; display: flex; }
.tree-rows { flex: 1; overflow: hidden; padding-top: 3px; }
.tree-row { height: 20px; display: flex; align-items: center; }
.g1 { align-self: stretch; width: 23px; margin-left: 36px; border-left: 1px dotted #555; }
.g1-short { width: 0; margin-right: -5px; margin-left: 36px; }
.g2 { position: relative; align-self: stretch; width: 14px; border-left: 1px dotted #555; }
.g2::after { content: ""; position: absolute; left: 0; right: 0; top: 10px; border-top: 1px dotted #555; }
.g3 { width: 9px; border-top: 1px dotted #555; }
.minus { width: 11px; height: 11px; border: 1px solid #999; font-size: 10px; line-height: 9px; text-align: center; background: #fff; color: #555; margin-left: -1px; }
.tree-ic { width: 18px; height: 18px; margin-right: 5px; flex: none; }
.tree-ic.mod { width: 20px; margin-left: -2px; }
.folder-ic { width: 18px; height: 14px; margin-right: 4px; }
.tree-text { white-space: nowrap; padding: 0 2px; line-height: 19px; }
.sel { background: #f0f0f0; }

.vscroll { width: 19px; flex: none; background: #f0f0f0; display: flex; flex-direction: column; align-items: center; color: #606060; }
.chev { width: 12px; height: 12px; margin: 4px 0; flex: none; color: #666; }
.chev.down { transform: rotate(180deg); }
.chev.thin { color: #777; width: 13px; height: 13px; }
.left-a { transform: rotate(-90deg); margin: 0 4px; }
.right-a { transform: rotate(90deg); margin: 0 4px; }
.thumb { width: 100%; background: #cdcdcd; flex: none; }
.thumb-space { flex: 1; }
.thumb-space.top { flex: 0 0 137px; }
.tree-scroll .thumb { height: 45px; }

.hscroll { height: 20px; flex: none; display: flex; align-items: center; background: #f0f0f0; }
.h-thumb { width: 318px; height: 20px; background: #cdcdcd; margin-left: 1px; }
.hscroll .right-a { margin-left: 25px; }

.props { margin-top: 7px; flex: 1; min-height: 0; display: flex; flex-direction: column; }
.prop-combo {
  height: 22px;
  margin-top: 4px;
  flex: none;
  background: #fff;
  border: 1px solid #8a8a8a;
  display: flex;
  align-items: center;
  justify-content: space-between;
  padding: 0 4px;
  margin-right: 2px;
}
.tabs { display: flex; height: 24px; margin-top: 3px; flex: none; padding-left: 1px; align-items: flex-end; }
.tab { width: 76px; height: 22px; text-align: center; line-height: 21px; background: #efefef; border: 1px solid #d8d8d8; border-bottom: 0; }
.tab.on { width: 73px; height: 24px; background: #fff; line-height: 21px; }
.prop-grid { flex: 1; min-height: 0; background: #fff; padding: 1px 2px; border: 2px solid #cfcfcf; margin: 0 2px 1px 2px; }
.prop-row { height: 21px; display: flex; border: 1px solid #bbb; line-height: 19px; font-size: 12.65px; }
.prop-name { width: 47px; padding-left: 1px; border-right: 1px solid #bbb; background: #f0f0f0; }
.prop-val { padding-left: 3px; }

.browser { height: 570px; flex: none; border-top: 2px solid #6f6f6f; display: flex; flex-direction: column; margin-top: 1px; margin-left: 1px; }
.ob-tools { height: 70px; flex: none; border-top: 1px solid #fff; border-bottom: 1px solid #9a9a9a; padding-left: 3px; }
.ob-row { height: 33px; display: flex; align-items: flex-start; }
.ob-row .tb-sep { margin-top: 2px; }
.ob-grip { margin-right: 5px; }
.ob-combo { width: 194px; height: 27px; border: 1px solid #8a8a8a; background: #fff; display: flex; align-items: center; justify-content: space-between; padding: 0 5px 0 3px; }
.ob-combo.gray { background: #e1e1e1; border-color: #adadad; font-size: 14px; color: #000; padding-bottom: 2px; }
.ob-btn { width: 26px; height: 26px; display: flex; align-items: center; justify-content: center; flex: none; }
.ob-btn.first { margin-left: 10px; }
.ob-btn + .tb-sep { margin-left: 3px; }
.ob-btn.wide { width: 27px; margin: 0 1px; }
.ob-btn.find { margin-left: 8px; }
.ob-btn.qm { margin-left: 4px; }

.ob-lists { height: 432px; flex: none; display: flex; overflow: hidden; }
.classes { flex: none; border-right: 6px solid #efefef; display: flex; flex-direction: column; width: 156px; }
.members { flex: 1; min-width: 0; display: flex; flex-direction: column; border-left: 2px solid #7d7d7d; margin-left: -1px; }
.list-head { height: 21px; flex: none; padding: 2px 0 0 2px; background: #efefef; border: 1px solid #f8f8f8; border-width: 1px 0 1px 1px; font-size: 14.8px; white-space: nowrap; }
.classes .list-head { padding-left: 4px; }
.list-body { flex: 1; min-height: 0; display: flex; background: #fff; }
.rows { flex: 1; min-width: 0; overflow: hidden; margin-bottom: 5px; }
.row { height: 19px; display: flex; align-items: center; font-size: 14.5px; white-space: nowrap; }
.row.bold { font-weight: 700; }
.row-ic { width: 20px; height: 18px; margin: 0 6px 0 1px; flex: none; }
.classes .row-ic { margin-right: 7px; }
.row-text { padding: 0 2px 0 0; }
.classes .row-text { overflow: hidden; }
.focus { outline: 1px dotted #000; outline-offset: -1px; padding: 0 30px 0 0; }
.picked .row-text { flex: 1; background: #0078d7; color: #fff; margin-left: -3px; padding-left: 3px; line-height: 19px; }
.class-scroll { width: 19px; }
.cs-top.thumb-space { flex: 0 0 34px; }
.cs-thumb { height: 21px; }
.mem-scroll { margin-left: 2px; }
.ms-top.thumb-space { flex: 0 0 113px; }
.ms-thumb { height: 41px; }
.list-body .chev.down { margin-bottom: 6px; }

.desc { height: 63px; flex: none; display: flex; border: 2px solid #8a8a8a; border-width: 2px 0 0 2px; border-bottom: 1px solid #fff; }
.desc-text { flex: 1; padding: 1px 0 0 4px; }
.d1 { font-size: 14.8px; height: 19px; line-height: 19px; white-space: nowrap; }
.d2 { font-size: 13px; margin-left: 15px; height: 16px; line-height: 15px; white-space: nowrap; }
a { color: #0b66d8; text-decoration: underline; }
.desc-scroll { width: 20px; display: flex; flex-direction: column; align-items: center; justify-content: space-between; padding: 0 0 3px; }

.bottom { flex: 1; min-height: 0; display: flex; margin-top: 3px; }
.immediate { width: 566px; flex: none; display: flex; flex-direction: column; margin-right: 6px; }
.imm-body { flex: 1; min-height: 0; display: flex; margin: 2px 0 0 2px; }
.imm-black { flex: 1; background: #1e1e1e; }
.imm-scroll { width: 22px; }
.imm-h { height: 22px; margin-left: 2px; justify-content: flex-start; }
.imm-thumb { width: 28px; height: 20px; margin-left: 6px; background: #cdcdcd; }
.hscroll.imm-h .right-a { margin-left: auto; margin-right: 26px; }
.watches { flex: 1; min-width: 0; display: flex; flex-direction: column; }
.w-body { flex: 1; min-height: 0; display: flex; background: #fff; margin: 3px 1px 2px 1px; border-left: 1px solid #8a8a8a; overflow: hidden; }
.w-table { flex: 1; min-width: 0; }
.w-head { height: 18px; display: grid; grid-template-columns: 225px 224px 222px 1fr; background: #f1f1f1; border-bottom: 2px solid #9e9e9e; font-size: 13px; line-height: 18px; }
.w-head span { padding-left: 5px; border-right: 1px solid #a8a8a8; }
.w-rows { position: relative; }
.w-line { position: absolute; left: 28px; top: 18px; bottom: 0; border-left: 1px dotted #444; }
.w-row { height: 18px; display: grid; grid-template-columns: 225px 224px 222px 1fr; align-items: center; line-height: 18px; white-space: nowrap; background: #fff; }
.w-row > span { overflow: hidden; padding-left: 1px; }
.w-row.top { background: transparent; }
.w-row.top > span:not(.w-ctx) { position: relative; z-index: 6; }
.w-row > .w-ctx { overflow: visible; padding-left: 2px; }
.w-exp { display: flex; align-items: center; }
.w-row > .w-exp { padding-left: 0; overflow: visible; }
.w-dash { width: 13px; height: 1px; background: #333; margin: 0 11px 0 29px; flex: none; }
.w-dash.short { margin-right: 0; width: 8px; }
.box-mark { width: 12px; height: 12px; border: 1px solid #444; font-size: 11px; line-height: 9px; text-align: center; flex: none; background: #fff; }
.box-mark.plus { margin: 0 4px 0 0; }
.glass { width: 15px; height: 13px; margin: 0 3px 0 5px; flex: none; }
.w-exp .box-mark:not(.plus) { margin-right: 3px; }
.gray { color: #8a8a8a; }
.w-scroll { width: 20px; }
.w-thumb { height: 104px; }

.taskbar { height: 50px; flex: none; display: flex; align-items: stretch; background: #1f2d33; color: #fff; }
.start { width: 63px; display: flex; align-items: center; justify-content: center; }
.app { position: relative; width: 62px; display: flex; align-items: center; justify-content: center; }
.app-svg { width: 30px; height: 30px; }
.app.line::after { content: ""; position: absolute; left: 6px; right: 5px; bottom: 0; height: 3px; background: #76b9ed; }
.app.active { background: #47595f; }
.app.active::after { left: 0; right: 0; }
.badge-t { font: 700 11px "Liberation Sans", sans-serif; fill: #dfe3ff; }
.zalo-badge { position: absolute; left: 31px; top: 22px; width: 20px; height: 20px; border-radius: 50%; background: #e00; font: 11px/20px "Noto Sans", sans-serif; text-align: center; color: #fff; }
.tb-fill { flex: 1; }
.tray { width: 40.5px; display: flex; align-items: center; justify-content: center; flex: none; }
.eng { font: 14px "Noto Sans", sans-serif; margin-right: 4px; }
.clock { width: 88px; display: flex; flex-direction: column; align-items: center; justify-content: center; gap: 2px; font: 14px/20px "Noto Sans", sans-serif; flex: none; }
.notif { position: relative; width: 68px; display: flex; align-items: center; padding: 0 0 4px 17px; flex: none; }
.notif-n { position: absolute; left: 24px; top: 23px; width: 24px; height: 21px; border-radius: 50%; background: #3a4448; border: 1px solid #8d9498; font: 700 13px/19px "Noto Sans", sans-serif; text-align: center; }

.mark { position: absolute; display: block; z-index: 5; border-style: solid; pointer-events: none; }
.red { border-color: #ed1c24; border-width: 3px; }
.green { border-color: #22b14c; border-width: 4px; background: #fff; }
.m-class { left: 416px; top: 488px; width: 135px; height: 36px; }
.m-member { left: 567px; top: 472px; width: 161px; height: 35px; }
.m-desc { left: 425px; top: 602px; width: 269px; height: 28px; }
.m-watch { left: 993px; top: 714px; width: 622px; height: 33px; }
.m-tip { left: 995px; top: 874px; width: 522px; height: 38px; }
.note-bg { position: absolute; z-index: 4; left: 1517px; top: 878px; width: 257px; height: 111px; background: #fff; }
.note { position: absolute; z-index: 5; left: 1534px; top: 878px; font: 700 21px/28px Lato, sans-serif; color: #22b14c; white-space: nowrap; }
</style>
